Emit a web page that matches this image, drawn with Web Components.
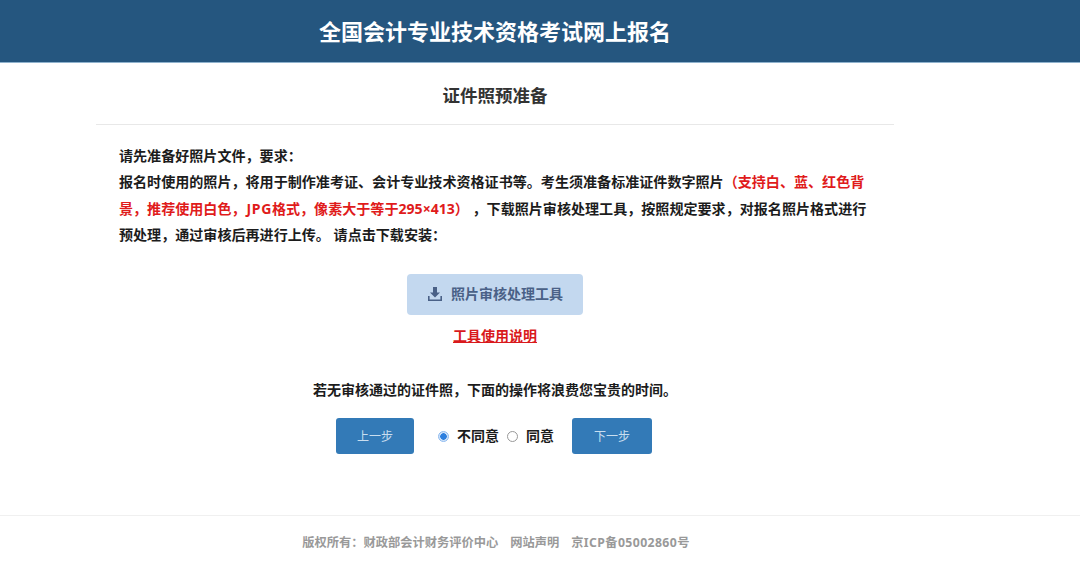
<!DOCTYPE html>
<html lang="zh">
<head>
<meta charset="utf-8">
<title>证件照预准备</title>
<style>
  html, body { margin: 0; padding: 0; background: #fff; }
  body { font-family: "Noto Sans", "Noto Sans CJK SC", "Liberation Sans", sans-serif; height: 577px; overflow: hidden; }
  .red { color: #e01b1b; }
  .jpg { letter-spacing: .6px; margin-left: 1px; }
  .icp { letter-spacing: .4px; }
</style>
</head>
<body>
<exam-header>全国会计专业技术资格考试网上报名</exam-header>
<exam-main>
  <span slot="title">证件照预准备</span>
  <notice-text>
    <div>请先准备好照片文件，要求：</div>
    <div>报名时使用的照片，将用于制作准考证、会计专业技术资格证书等。考生须准备标准证件数字照片<span class="red">（支持白、蓝、红色背</span><span class="red">景，推荐使用白色，</span><span class="red jpg">JPG</span><span class="red">格式，像素大于等于295×413）</span> ，下载照片审核处理工具，按照规定要求，对报名照片格式进行预处理，通过审核后再进行上传。 请点击下载安装：</div>
  </notice-text>
  <tool-download label="照片审核处理工具" help="工具使用说明"></tool-download>
  <agree-step>若无审核通过的证件照，下面的操作将浪费您宝贵的时间。</agree-step>
</exam-main>
<exam-footer>
  <span>版权所有：财政部会计财务评价中心</span><span>网站声明</span><span class="icp">京ICP备05002860号</span>
</exam-footer>

<script>
class ExamHeader extends HTMLElement {
	constructor() {
		super();
		this.attachShadow({ mode: 'open' }).innerHTML = `
  <style>
    :host{
      display: block;
      height: 62px;
      background-color: #25567f;
      border-bottom: 1px solid #8fb2cd;
    }
    .inner{
      width: 798px;
      margin-left: 96px;
      height: 62px;
      box-sizing: border-box;
      padding-bottom: 2px;
      display: flex;
      align-items: center;
      justify-content: center;
      color: #fff;
      font-size: 22px;
      font-weight: 700;
    }
  </style>
  <div class="inner"><slot></slot></div>`;
	}
}
customElements.define('exam-header', ExamHeader);

class ExamMain extends HTMLElement {
	constructor() {
		super();
		this.attachShadow({ mode: 'open' }).innerHTML = `
  <style>
    :host{
      display: block;
      width: 798px;
      height: 452px;
      margin-left: 96px;
    }
    h2{
      margin: 0;
      height: 62px;
      box-sizing: border-box;
      padding-top: 2px;
      border-bottom: 1px solid #e8e8e8;
      display: flex;
      align-items: center;
      justify-content: center;
      font-size: 17.5px;
      font-weight: 700;
      color: #333;
    }
  </style>
  <h2><slot name="title"></slot></h2>
  <slot></slot>`;
	}
}
customElements.define('exam-main', ExamMain);

class NoticeText extends HTMLElement {
	constructor() {
		super();
		this.attachShadow({ mode: 'open' }).innerHTML = `
  <style>
    :host{
      display: block;
      box-sizing: border-box;
      padding: 17.5px 24px 0 23px;
      font-size: 14.07px;
      font-weight: 700;
      line-height: 26.5px;
      color: #1c1c1c;
    }
  </style>
  <slot></slot>`;
	}
}
customElements.define('notice-text', NoticeText);

class ToolDownload extends HTMLElement {
	constructor() {
		super();
		this.attachShadow({ mode: 'open' }).innerHTML = `
  <style>
    :host{
      display: flex;
      flex-direction: column;
      align-items: center;
      margin-top: 25.5px;
    }
    a{ text-decoration: none; }
    .btn{
      width: 176px;
      height: 41px;
      display: flex;
      align-items: center;
      justify-content: center;
      gap: 8px;
      background-color: #c3d8ef;
      border-radius: 4px;
      color: #4a6187;
      font-size: 14px;
      font-weight: 700;
    }
    .btn span{ padding-bottom: 4px; }
    svg{ width: 16px; height: 16px; flex: none; margin-bottom: 2px; }
    .help{
      margin-top: 10px;
      color: #d9191c;
      font-size: 14px;
      line-height: 22px;
      font-weight: 700;
      text-decoration: underline;
    }
  </style>
  <a class="btn" href="#">
    <svg viewBox="0 0 16 16" fill="#4a6187"><path d="M6 1h4v5.5h3L8 11.5 3 6.5h3z"/><path d="M1 10h1.6v3.6h10.8V10H15v5H1z"/></svg>
    <span>${this.getAttribute('label')}</span>
  </a>
  <a class="help" href="#">${this.getAttribute('help')}</a>`;
	}
}
customElements.define('tool-download', ToolDownload);

class AgreeStep extends HTMLElement {
	constructor() {
		super();
		this.attachShadow({ mode: 'open' }).innerHTML = `
  <style>
    :host{
      display: block;
      margin-top: 32px;
    }
    .warn{
      text-align: center;
      font-size: 14px;
      font-weight: 700;
      line-height: 22px;
      color: #1c1c1c;
    }
    .row{
      display: flex;
      align-items: center;
      justify-content: center;
      margin-top: 17px;
      padding-right: 2px;
    }
    button{
      height: 36px;
      border: 0;
      border-radius: 3px;
      background-color: #337ab7;
      color: #c9deef;
      font-family: inherit;
      font-size: 12px;
    }
    .prev{ width: 78px; margin-right: 24px; }
    .next{ width: 80px; margin-left: 18px; }
    label{
      display: flex;
      align-items: center;
      font-size: 14px;
      font-weight: 700;
      color: #1c1c1c;
    }
    label span{ padding-bottom: 3px; }
    label + label{ margin-left: 8px; }
    input{
      appearance: none;
      width: 11px;
      height: 11px;
      margin: 0 8px 0 0;
      box-sizing: border-box;
      border: 1px solid #999;
      border-radius: 50%;
      background: #fff;
    }
    input:checked{
      border-color: #8dbaf0;
      background: radial-gradient(circle, #2d7fde 0 3px, #cfe2f8 3.5px);
    }
  </style>
  <div class="warn"><slot></slot></div>
  <div class="row">
    <button class="prev">上一步</button>
    <label><input type="radio" name="agree" checked><span>不同意</span></label>
    <label><input type="radio" name="agree"><span>同意</span></label>
    <button class="next">下一步</button>
  </div>`;
	}
}
customElements.define('agree-step', AgreeStep);

class ExamFooter extends HTMLElement {
	constructor() {
		super();
		this.attachShadow({ mode: 'open' }).innerHTML = `
  <style>
    :host{
      display: flex;
      justify-content: center;
      align-items: center;
      gap: 12px;
      height: 52px;
      border-top: 1px solid #f0f0f0;
      padding-right: 88px;
      font-size: 12.25px;
      font-weight: 700;
      color: #999;
    }
  </style>
  <slot></slot>`;
	}
}
customElements.define('exam-footer', ExamFooter);
</script>
</body>
</html>
